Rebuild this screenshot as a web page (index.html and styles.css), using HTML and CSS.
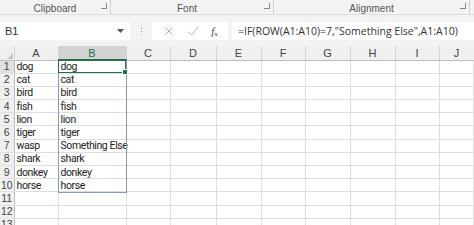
FILE: index.html
```html
<!DOCTYPE html>
<html lang="en">
<head>
  <meta charset="UTF-8">
  <title>Spill formula</title>
  <link rel="stylesheet" href="styles.css">
</head>
<body>
  <!-- Ribbon group labels -->
  <div class="ribbon">
    <div class="group group-clipboard"><span class="label">Clipboard</span><span class="launcher"></span></div>
    <div class="group group-font"><span class="label">Font</span><span class="launcher"></span></div>
    <div class="group group-align"><span class="label">Alignment</span><span class="launcher"></span></div>
  </div>

  <!-- Formula bar -->
  <div class="formula-bar">
    <div class="name-box">
      <span>B1</span>
      <svg width="7" height="4" viewBox="0 0 7 4"><path d="M0 0h7L3.5 4z" fill="#555"/></svg>
    </div>
    <div class="dots"><i></i><i></i><i></i></div>
    <div class="fx-buttons">
      <svg width="10" height="10" viewBox="0 0 10 10"><path d="M1.5 1.5l7 7M8.5 1.5l-7 7" stroke="#b0b0b0" stroke-width="1"/></svg>
      <svg width="12" height="10" viewBox="0 0 12 10"><path d="M1 5.5l3.5 3.5L11 1" stroke="#b0b0b0" stroke-width="1" fill="none"/></svg>
      <span class="fx"><em>f</em><sub>x</sub></span>
    </div>
    <div class="formula-input">=IF(ROW(A1:A10)=7,"Something Else",A1:A10)</div>
  </div>

  <!-- Sheet -->
  <div class="sheet">
    <table class="grid">
      <colgroup>
        <col class="c-row"><col class="c-a"><col class="c-b"><col class="c-44"><col class="c-46"><col class="c-45">
        <col class="c-44"><col class="c-45"><col class="c-45"><col class="c-44"><col>
      </colgroup>
      <thead>
        <tr>
          <th class="corner"><span class="tri"></span></th>
          <th>A</th><th class="active">B</th><th>C</th><th>D</th><th>E</th>
          <th>F</th><th>G</th><th>H</th><th>I</th><th>J</th>
        </tr>
      </thead>
      <tbody>
        <tr><th class="active-row">1</th><td>dog</td><td>dog</td><td></td><td></td><td></td><td></td><td></td><td></td><td></td><td></td></tr>
        <tr><th>2</th><td>cat</td><td>cat</td><td></td><td></td><td></td><td></td><td></td><td></td><td></td><td></td></tr>
        <tr><th>3</th><td>bird</td><td>bird</td><td></td><td></td><td></td><td></td><td></td><td></td><td></td><td></td></tr>
        <tr><th>4</th><td>fish</td><td>fish</td><td></td><td></td><td></td><td></td><td></td><td></td><td></td><td></td></tr>
        <tr><th>5</th><td>lion</td><td>lion</td><td></td><td></td><td></td><td></td><td></td><td></td><td></td><td></td></tr>
        <tr><th>6</th><td>tiger</td><td>tiger</td><td></td><td></td><td></td><td></td><td></td><td></td><td></td><td></td></tr>
        <tr><th>7</th><td>wasp</td><td>Something Else</td><td></td><td></td><td></td><td></td><td></td><td></td><td></td><td></td></tr>
        <tr><th>8</th><td>shark</td><td>shark</td><td></td><td></td><td></td><td></td><td></td><td></td><td></td><td></td></tr>
        <tr><th>9</th><td>donkey</td><td>donkey</td><td></td><td></td><td></td><td></td><td></td><td></td><td></td><td></td></tr>
        <tr><th>10</th><td>horse</td><td>horse</td><td></td><td></td><td></td><td></td><td></td><td></td><td></td><td></td></tr>
        <tr><th>11</th><td></td><td></td><td></td><td></td><td></td><td></td><td></td><td></td><td></td><td></td></tr>
        <tr><th>12</th><td></td><td></td><td></td><td></td><td></td><td></td><td></td><td></td><td></td><td></td></tr>
        <tr><th>13</th><td></td><td></td><td></td><td></td><td></td><td></td><td></td><td></td><td></td><td></td></tr>
      </tbody>
    </table>
    <div class="spill-range"></div>
    <div class="active-cell"><span class="handle"></span></div>
  </div>
</body>
</html>
```

FILE: styles.css
```css
body {
  margin: 0;
  background-color: #f3f3f3;
  font-family: "Liberation Sans", Arial, sans-serif;
  color: #333;
  width: 474px;
  height: 225px;
  overflow: hidden;
}

.ribbon {
  display: flex;
  height: 14px;
  border-bottom: 1px solid #dcdcdc;
  font-size: 10px;
  color: #555;
}

.group {
  position: relative;
  display: flex;
  align-items: center;
  justify-content: center;
  padding-top: 2px;
  border-right: 1px solid #d0d0d0;
  box-sizing: border-box;
}

.group-clipboard { width: 111px; }
.group-font { width: 163px; padding-right: 10px; }
.group-align { width: 196px; }

.launcher {
  position: absolute;
  right: 3px;
  top: 3px;
  width: 5px;
  height: 5px;
  border-right: 1px solid #888;
  border-bottom: 1px solid #888;
}

.formula-bar {
  display: flex;
  align-items: stretch;
  height: 18px;
  margin-top: 7px;
  font-size: 11px;
}

.name-box {
  width: 130px;
  box-sizing: border-box;
  background-color: #fff;
  display: flex;
  align-items: center;
  justify-content: space-between;
  padding: 0 6px 0 5px;
  color: #333;
}

.dots {
  width: 22px;
  display: flex;
  flex-direction: column;
  align-items: center;
  justify-content: center;
  gap: 2px;
}

.dots i {
  width: 1px;
  height: 1px;
  background-color: #999;
}

.fx-buttons {
  width: 76px;
  background-color: #fff;
  display: flex;
  align-items: center;
  justify-content: space-around;
  padding: 0 4px 0 6px;
  box-sizing: border-box;
}

.fx {
  font-family: "Liberation Serif", serif;
  font-size: 11px;
  color: #444;
}

.fx sub {
  font-size: 7px;
  vertical-align: -1px;
}

.formula-input {
  flex: 1;
  margin-left: 4px;
  background-color: #fff;
  display: flex;
  align-items: center;
  padding-left: 6px;
  color: #333;
  font-family: "Open Sans", sans-serif;
  font-size: 10.5px;
  white-space: nowrap;
}

.sheet {
  position: relative;
  margin-top: 6px;
  background-color: #fff;
}

.grid {
  border-collapse: collapse;
  table-layout: fixed;
  width: 474px;
}

.c-row { width: 14px; }
.c-a { width: 44px; }
.c-b { width: 68px; }
.c-44 { width: 44px; }
.c-45 { width: 45px; }
.c-46 { width: 46px; }

.grid th {
  background-color: #f0f0f0;
  font-weight: normal;
  color: #444;
  font-size: 11px;
  padding: 0;
}

.grid thead tr {
  height: 14px;
}

.grid thead th {
  border-left: 1px solid #d4d4d4;
  border-bottom: 1px solid #bdbdbd;
  line-height: 12px;
}

.grid thead th.active {
  background-color: #d3d3d3;
  border-bottom: 2px solid #217346;
  color: #1d6b3f;
}

.corner {
  position: relative;
  border-left: none !important;
}

.tri {
  position: absolute;
  right: 1px;
  bottom: 1px;
  width: 0;
  height: 0;
  border-left: 6px solid transparent;
  border-bottom: 6px solid #c4c4c4;
}

.grid tbody tr {
  height: 13.2px;
}

.grid tbody th {
  text-align: center;
  border-right: 1px solid #bdbdbd;
  border-bottom: 1px solid #e2e2e2;
  line-height: 11px;
  font-size: 10.5px;
  overflow: hidden;
}

.grid tbody th.active-row {
  background-color: #e0e0e0;
}

.grid td {
  padding: 0 0 0 2px;
  border-right: 1px solid #dedede;
  border-bottom: 1px solid #dedede;
  font-family: Roboto, sans-serif;
  font-size: 10.5px;
  letter-spacing: -0.4px;
  line-height: 11px;
  color: #222;
  white-space: nowrap;
  overflow: visible;
}

.spill-range {
  position: absolute;
  left: 58px;
  top: 14px;
  width: 67px;
  height: 131px;
  border: 1px solid #7d9bd1;
}

.active-cell {
  position: absolute;
  left: 58px;
  top: 14px;
  width: 66px;
  height: 11px;
  border: 1.5px solid #217346;
}

.handle {
  position: absolute;
  right: -3px;
  bottom: -3px;
  width: 4px;
  height: 4px;
  background-color: #217346;
  border: 1px solid #fff;
}
```
